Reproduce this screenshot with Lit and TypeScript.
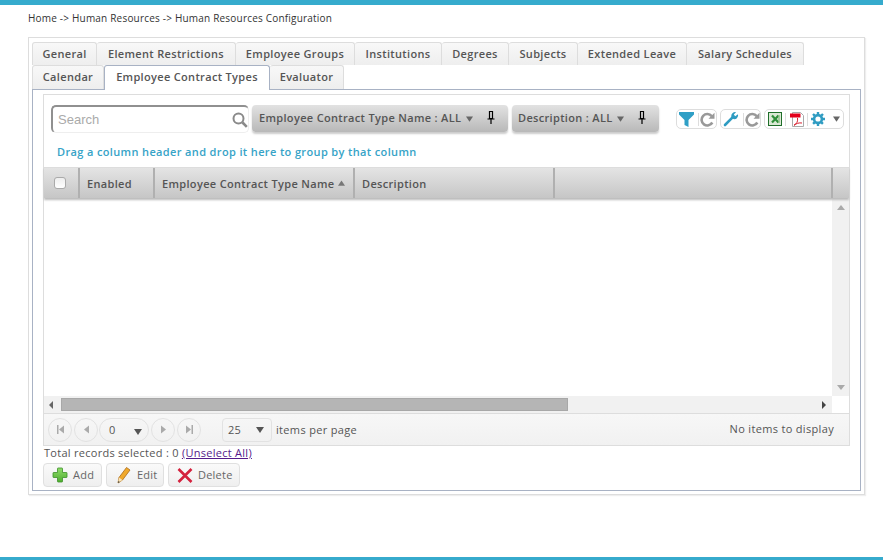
import { LitElement, html, css, svg } from 'lit';
import { customElement } from 'lit/decorators.js';

const row1 = ['General', 'Element Restrictions', 'Employee Groups', 'Institutions', 'Degrees', 'Subjects', 'Extended Leave', 'Salary Schedules'];

const pin = svg`<svg class="pin" width="8" height="13" viewBox="0 0 8 13"><path d="M2.500 .5h3v7h-3zM.5 8h7M4 8v5" fill="none" stroke="#000" stroke-width="1.200"/></svg>`;
const refresh = svg`<svg width="15" height="15" viewBox="0 0 15 15"><path d="M12.300 10.500a5.700 5.700 0 1 1-.6-6.400" fill="none" stroke="#999" stroke-width="2.600"/><path d="M14.500 .8v6h-6z" fill="#999"/></svg>`;
const wrench = svg`<svg width="16" height="16" viewBox="0 0 16 16"><path d="M2 14L9.300 6.700" stroke="#2f9cc2" stroke-width="2.600" stroke-linecap="round"/><path d="M15 3.200a3.800 3.800 0 0 1-5.200 4.600L8.300 5.800A4 4 0 0 1 13 1.200L10.800 3.500l1.400 1.700z" fill="#2f9cc2"/></svg>`;
const funnel = svg`<svg width="15" height="15" viewBox="0 0 15 15"><path d="M0 0h15v2.500L9.500 8v7l-4-2V8L0 2.500z" fill="#2f9fc6"/></svg>`;
const excel = svg`<svg width="14" height="14" viewBox="0 0 14 14"><rect x=".5" y=".5" width="13" height="13" fill="#dbe9d5" stroke="#1f6e2a"/><path d="M4 3.500l6.500 7M10.500 3.500l-6.500 7" stroke="#2f8f3a" stroke-width="2.200"/><path d="M10 3h2v8h-2z" fill="#8fbf86" opacity=".7"/></svg>`;
const pdf = svg`<svg width="14" height="15" viewBox="0 0 14 15"><path d="M2.500 .5h8l3 3v11h-11z" fill="#fff" stroke="#aaa"/><rect x="0" y="1.500" width="10.500" height="4" fill="#e3001b"/><path d="M4 13c3-1 4-4 3.500-7M4 13.500c2-2 5-3 8-2.500" fill="none" stroke="#d9202f" stroke-width="1"/></svg>`;
const gear = svg`<svg width="14" height="14" viewBox="0 0 14 14"><circle cx="7" cy="7" r="3.900" fill="none" stroke="#2f9cc2" stroke-width="2.600"/><path d="M7 0v14M0 7h14M2 2l10 10M12 2L2 12" stroke="#2f9cc2" stroke-width="2.400" stroke-dasharray="2.400 9.200"/></svg>`;
const lens = svg`<svg width="16" height="16" viewBox="0 0 16 16"><circle cx="6.500" cy="6.500" r="5" fill="none" stroke="#8a8a8a" stroke-width="2"/><path d="M10.500 10.500l4.300 4.300" stroke="#8a8a8a" stroke-width="2.600"/></svg>`;
const plus = svg`<svg width="16" height="16" viewBox="0 0 16 16"><defs><linearGradient id="pg" x1="0" y1="0" x2="0" y2="1"><stop offset="0" stop-color="#8fdc6a"/><stop offset="1" stop-color="#4fae2f"/></linearGradient></defs><path d="M6 1h4a.5.5 0 0 1 .5.5v4h4a.5.5 0 0 1 .5.5v4a.5.5 0 0 1-.5.5h-4v4a.5.5 0 0 1-.5.5H6a.5.5 0 0 1-.5-.5v-4h-4A.5.5 0 0 1 1 10V6a.5.5 0 0 1 .5-.5h4v-4A.5.5 0 0 1 6 1z" fill="url(#pg)" stroke="#3c8f2a" stroke-width=".8"/></svg>`;
const pencil = svg`<svg width="14" height="18" viewBox="0 0 14 18"><path d="M1 17l1-5.500L9.500 1.500l3.500 2.500L5.500 14z" fill="#f0a92c" stroke="#a8691a" stroke-width=".8"/><path d="M1 17l1-5.500L5.500 14z" fill="#f7e3b8"/><path d="M1 17l.4-2 1.400 1z" fill="#333"/></svg>`;
const cross = svg`<svg width="16" height="15" viewBox="0 0 16 15"><path d="M1.500 1l13 13M14.500 1l-13 13" stroke="#d4213d" stroke-width="2.600"/></svg>`;
const first = svg`<svg width="9" height="9" viewBox="0 0 9 9"><path d="M1 0h1.500v9H1zM8 .5v8L3 4.500z" fill="#aaa"/></svg>`;
const prev = svg`<svg width="7" height="9" viewBox="0 0 7 9"><path d="M6 .5v8L1 4.500z" fill="#aaa"/></svg>`;
const next = svg`<svg width="7" height="9" viewBox="0 0 7 9"><path d="M1 .5v8l5-4z" fill="#aaa"/></svg>`;
const last = svg`<svg width="9" height="9" viewBox="0 0 9 9"><path d="M1 .5v8l5-4zM6.500 0H8v9H6.500z" fill="#aaa"/></svg>`;

@customElement('app-root')
export class AppRoot extends LitElement {
  static styles = css`
    :host {
      display: block;
      width: 883px;
      height: 560px;
      box-sizing: border-box;
      background: #fff;
      border-top: 5px solid #36abcd;
      border-bottom: 3px solid #36abcd;
      font-family: 'Open Sans', sans-serif;
      font-size: 11px;
      color: #555;
      overflow: hidden;
    }
    .crumb {
      height: 32px;
      padding: 7px 0 0 28px;
      box-sizing: border-box;
      font-size: 10px;
      line-height: 13px;
      letter-spacing: 0.02em;
      color: #333;
    }
    .outer {
      width: 837px;
      height: 458px;
      margin-left: 28px;
      padding: 4px 3px;
      box-sizing: border-box;
      border: 1px solid #ddd;
      box-shadow: 1px 1px 1px #eee;
    }
    .tabrow { display: flex; height: 24px; }
    .tabrow.top { height: 23px; }
    .tab {
      box-sizing: border-box;
      height: 24px;
      border: 1px solid #ddd;
      border-bottom: none;
      border-radius: 3px 3px 0 0;
      background: linear-gradient(#f8f8f8, #eee);
      font-weight: 600;
      font-size: 11px;
      line-height: 22px;
      text-align: center;
      letter-spacing: 0.03em;
      color: #555;
      white-space: nowrap;
    }
    .top .tab { height: 23px; line-height: 21px; }
    .tab + .tab { border-left: none; }
    .tab.active {
      height: 25px;
      position: relative;
      z-index: 1;
      background: #fff;
      border: 1px solid #a8b2c4;
      border-bottom: none;
      line-height: 22px;
    }
    .panel {
      box-sizing: border-box;
      width: 829px;
      height: 402px;
      padding: 4px 10px 0;
      border: 1px solid #a8b2c4;
    }
    .grid {
      box-sizing: border-box;
      width: 807px;
      height: 352px;
      border: 1px solid #ddd;
      display: flex;
      flex-direction: column;
    }
    .toolbar {
      display: flex;
      align-items: flex-start;
      height: 39px;
      flex: none;
      padding: 10px 0 0 7px;
    }
    .search {
      flex: none;
      box-sizing: border-box;
      width: 198px;
      height: 28px;
      display: flex;
      align-items: center;
      justify-content: space-between;
      padding: 0 0 0 5px;
      border: 1px solid #eee;
      border-top: 2px solid #909090;
      border-left: 2px solid #909090;
      border-radius: 5px;
      font-family: 'Liberation Sans', Arial, sans-serif;
      font-size: 13px;
      color: #aaa;
    }
    .search svg { margin-top: 1px; }
    .chip {
      flex: none;
      box-sizing: border-box;
      height: 27px;
      margin-left: 3px;
      display: flex;
      align-items: center;
      padding: 0 13px 3px 7px;
      border-radius: 4px;
      background: linear-gradient(#e2e2e2, #b8b8b8);
      box-shadow: 0 2px 2px #ccc;
      font-weight: 600;
      font-size: 11px;
      letter-spacing: 0.03em;
      color: #555;
      white-space: nowrap;
    }
    .chip + .chip { margin-left: 4px; padding-left: 6px; }
    .chip .name { flex: 1; }
    .chip .tri { width: 7px; margin-top: 4px; }
    .chip .pin { margin-left: 14px; }
    .tools { flex: none; display: flex; gap: 3px; margin-left: 17px; margin-top: 4px; }
    .tgroup {
      box-sizing: border-box;
      width: 41px;
      height: 20px;
      display: flex;
      align-items: center;
      border: 1px solid #ddd;
      border-radius: 5px;
      padding-left: 2px;
      background: #fff;
    }
    .tgroup .sep { width: 1px; height: 13px; background: #ddd; margin: 0 1px 0 4px; }
    .tgroup.wide { width: 80px; padding-left: 3px; }
    .tgroup.wide .sep { margin: 0 3px 0 3px; }
    .tgroup.wide .sep:first-of-type { margin: 0 4px 0 3px; }
    .tgroup.wide .tri { margin-left: 8px; width: 7px; }
    .droptext {
      height: 23px;
      flex: none;
      padding-left: 13px;
      box-sizing: border-box;
      font-weight: 600;
      font-size: 11px;
      line-height: 16px;
      letter-spacing: 0.033em;
      color: #36a3c7;
    }
    .head {
      height: 31px;
      flex: none;
      display: grid;
      grid-template-columns: 36px 75px 200px 200px 278px 1fr;
      background: linear-gradient(#e4e4e4, #c6c6c6);
      border-top: 1px solid #ddd;
      box-sizing: border-box;
      box-shadow: 0 2px 2px #bbb;
      position: relative;
      z-index: 1;
    }
    .th {
      display: flex;
      align-items: center;
      padding-left: 7px;
      box-sizing: border-box;
      border-right: 2px solid #b0b0b0;
      font-weight: 600;
      font-size: 11px;
      letter-spacing: 0.03em;
      color: #555;
      white-space: nowrap;
    }
    .th:last-child { border-right: none; }
    .th.check { padding-left: 10px; }
    .th .tri { margin-left: 4px; width: 7px; }
    .box {
      width: 12px;
      height: 12px;
      box-sizing: border-box;
      border: 1px solid #aaa;
      border-radius: 3px;
      background: linear-gradient(#eee, #fff);
    }
    .body {
      flex: 1;
      display: grid;
      grid-template-columns: 1fr 17px;
      grid-template-rows: 1fr 17px;
      min-height: 0;
    }
    .vbar {
      background: #f1f1f1;
      display: flex;
      flex-direction: column;
      justify-content: space-between;
      align-items: center;
      padding: 7px 0 6px;
    }
    .hbar {
      background: #f1f1f1;
      display: flex;
      align-items: center;
      padding-left: 5px;
    }
    .thumb {
      margin-left: 8px;
      width: 507px;
      height: 13px;
      box-sizing: border-box;
      background: #b5b5b5;
      border: 1px solid #a8a8a8;
    }
    .hbar .end { margin-left: auto; margin-right: 6px; }
    .pager {
      flex: none;
      height: 32px;
      box-sizing: border-box;
      display: flex;
      align-items: center;
      padding: 0 15px 0 4px;
      border-top: 1px solid #ddd;
      background: linear-gradient(#f7f7f7, #f1f1f1);
      letter-spacing: 0.03em;
    }
    .pager span { margin-top: -1px; }
    .nav {
      box-sizing: border-box;
      width: 24px;
      height: 24px;
      display: flex;
      align-items: center;
      justify-content: center;
      border: 1px solid #e2e2e2;
      border-radius: 50%;
      margin-right: 2px;
    }
    .nav.tight { margin-right: 1px; }
    .num {
      box-sizing: border-box;
      width: 50px;
      height: 24px;
      display: flex;
      align-items: center;
      justify-content: space-between;
      padding: 0 6px 0 9px;
      border: 1px solid #e2e2e2;
      border-radius: 12px;
      margin-right: 2px;
    }
    .num .tri { margin-top: 5px; }
    .size {
      box-sizing: border-box;
      width: 50px;
      height: 24px;
      margin-left: 19px;
      display: flex;
      align-items: center;
      justify-content: space-between;
      padding: 0 7px 0 5px;
      border: 1px solid #e2e2e2;
      border-radius: 4px;
    }
    .perpage { margin-left: 4px; }
    .pager .empty { margin-left: auto; margin-top: -3px; }
    .total {
      height: 17px;
      padding-left: 1px;
      line-height: 13px;
      letter-spacing: 0.025em;
      color: #555;
      white-space: nowrap;
    }
    .total a { color: #551a8b; text-decoration: underline; }
    .actions { display: flex; gap: 4px; }
    .btn {
      box-sizing: border-box;
      height: 24px;
      display: flex;
      align-items: center;
      border: 1px solid #e0e0e0;
      border-radius: 4px;
      background: linear-gradient(#fafafa, #efefef);
      letter-spacing: 0.02em;
      color: #666;
    }
    .btn span { margin-top: -2px; }
    .btn.add { width: 59px; padding-left: 8px; gap: 5px; }
    .btn.edit { width: 58px; padding-left: 10px; gap: 6px; }
    .btn.del { width: 72px; padding-left: 8px; gap: 5px; }
  `;

  private tri(color = '#666') {
    return svg`<svg class="tri" width="8" height="6" viewBox="0 0 8 6"><path d="M0 0h8L4 6z" fill=${color}/></svg>`;
  }

  render() {
    const widths = [65, 139, 119, 87, 67, 69, 109, 117];
    return html`
      <div class="crumb">Home -&gt; Human Resources -&gt; Human Resources Configuration</div>
      <div class="outer">
        <div class="tabrow top">
          ${row1.map((t, i) => html`<div class="tab" style="width:${widths[i]}px">${t}</div>`)}
        </div>
        <div class="tabrow">
          <div class="tab" style="width:72px">Calendar</div>
          <div class="tab active" style="width:166px">Employee Contract Types</div>
          <div class="tab" style="width:74px">Evaluator</div>
        </div>
        <div class="panel">
          <div class="grid">
            <div class="toolbar">
              <div class="search"><span>Search</span>${lens}</div>
              <div class="chip" style="width:256px"><span class="name">Employee Contract Type Name : ALL</span>${this.tri()}${pin}</div>
              <div class="chip" style="width:147px"><span class="name">Description : ALL</span>${this.tri()}${pin}</div>
              <div class="tools">
                <div class="tgroup">${funnel}<span class="sep"></span>${refresh}</div>
                <div class="tgroup">${wrench}<span class="sep"></span>${refresh}</div>
                <div class="tgroup wide">${excel}<span class="sep"></span>${pdf}<span class="sep"></span>${gear}${this.tri()}</div>
              </div>
            </div>
            <div class="droptext">Drag a column header and drop it here to group by that column</div>
            <div class="head">
              <div class="th check"><span class="box"></span></div>
              <div class="th">Enabled</div>
              <div class="th">Employee Contract Type Name
                <svg class="tri" width="8" height="6" viewBox="0 0 8 6"><path d="M0 6h8L4 0z" fill="#777"/></svg>
              </div>
              <div class="th">Description</div>
              <div class="th"></div>
              <div class="th"></div>
            </div>
            <div class="body">
              <div></div>
              <div class="vbar">
                <svg width="8" height="5" viewBox="0 0 8 5"><path d="M0 5h8L4 0z" fill="#aaa"/></svg>
                <svg width="8" height="5" viewBox="0 0 8 5"><path d="M0 0h8L4 5z" fill="#aaa"/></svg>
              </div>
              <div class="hbar">
                <svg width="4" height="8" viewBox="0 0 4 8"><path d="M4 0v8L0 4z" fill="#666"/></svg>
                <div class="thumb"></div>
                <svg class="end" width="4" height="8" viewBox="0 0 4 8"><path d="M0 0v8l4-4z" fill="#444"/></svg>
              </div>
              <div style="background:#fff"></div>
            </div>
            <div class="pager">
              <div class="nav">${first}</div>
              <div class="nav tight">${prev}</div>
              <div class="num"><span>0</span>${this.tri('#555')}</div>
              <div class="nav">${next}</div>
              <div class="nav">${last}</div>
              <div class="size"><span>25</span>${this.tri('#555')}</div>
              <span class="perpage">items per page</span>
              <span class="empty">No items to display</span>
            </div>
          </div>
          <div class="total">Total records selected : 0 <a>(Unselect All)</a></div>
          <div class="actions">
            <div class="btn add">${plus}<span>Add</span></div>
            <div class="btn edit">${pencil}<span>Edit</span></div>
            <div class="btn del">${cross}<span>Delete</span></div>
          </div>
        </div>
      </div>
    `;
  }
}
